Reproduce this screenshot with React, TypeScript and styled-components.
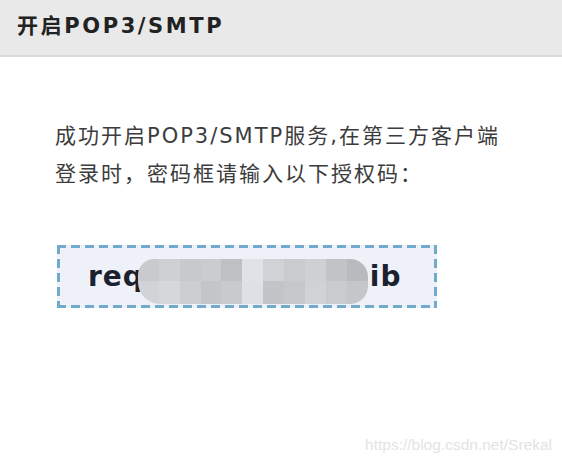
import React from "react";
import styled, { createGlobalStyle } from "styled-components";

const Global = createGlobalStyle`
  html, body { margin: 0; padding: 0; background: #ffffff; }
  body { width: 562px; height: 468px; overflow: hidden; }
`;

const Page = styled.div`
  width: 562px;
  height: 468px;
  display: flex;
  flex-direction: column;
  background: #ffffff;
  font-family: "DejaVu Sans", "Noto Sans CJK SC", sans-serif;
`;

const Header = styled.div`
  height: 57px;
  box-sizing: border-box;
  background: #e9e9e9;
  border-bottom: 2px solid #dadada;
  display: flex;
  align-items: center;
  padding: 0 0 8px 17px;
`;

const Title = styled.h1`
  margin: 0;
  font-size: 21px;
  font-weight: 700;
  color: #222222;
  letter-spacing: 2.6px;
`;

const Body = styled.div`
  flex: 1;
  display: flex;
  flex-direction: column;
  padding: 60px 0 0 55px;
`;

const Message = styled.p`
  margin: 0;
  font-size: 21px;
  line-height: 38px;
  color: #3c3c3c;
  letter-spacing: 2px;
  width: 500px;
`;

const CodeBox = styled.div`
  margin: 52px 0 0 2px;
  width: 380px;
  height: 63px;
  box-sizing: border-box;
  display: flex;
  align-items: center;
  padding: 0 0 0 31px;
  background-color: #eef2f8;
  background-image:
    repeating-linear-gradient(90deg, #72aace 0 9px, transparent 9px 14px),
    repeating-linear-gradient(90deg, #72aace 0 9px, transparent 9px 14px),
    repeating-linear-gradient(180deg, #72aace 0 9px, transparent 9px 14px),
    repeating-linear-gradient(180deg, #72aace 0 9px, transparent 9px 14px);
  background-size: 100% 3px, 100% 3px, 3px 100%, 3px 100%;
  background-position: 0 0, 0 100%, 0 0, 100% 0;
  background-repeat: no-repeat;
`;

const CodeText = styled.span`
  font-family: "DejaVu Sans", sans-serif;
  font-weight: 700;
  font-size: 28px;
  color: #1c2130;
  letter-spacing: 1px;
`;

const Mosaic = styled.div`
  width: 230px;
  height: 45px;
  margin: 9px 2px 0 -6px;
  border-radius: 16px 18px 18px 22px;
  overflow: hidden;
  display: grid;
  grid-template-rows: 1fr 1fr;
  grid-auto-flow: column;
  grid-auto-columns: 1fr;
`;

const Tile = styled.div<{ $c: string }>`
  background: ${(p) => p.$c};
`;

const Watermark = styled.div`
  margin-top: auto;
  align-self: flex-end;
  padding: 0 10px 14px 0;
  font-family: "Liberation Sans", Arial, sans-serif;
  font-size: 15.5px;
  color: #e3e3e3;
`;

const tiles: string[] = [
  "#c9cacd", "#d2d3d6",
  "#cfd0d3", "#d6d7da",
  "#c8c9cc", "#cdced1",
  "#cbcccf", "#c4c5c8",
  "#bfc0c3", "#c9cacd",
  "#dfe2e6", "#dde0e4",
  "#d1d2d5", "#c3c4c7",
  "#cacbce", "#c6c7ca",
  "#cfd0d3", "#d1d2d5",
  "#c2c3c6", "#cacbce",
  "#b9babd", "#c5c6c9",
];

export default function App() {
  return (
    <>
      <Global />
      <Page>
        <Header>
          <Title>开启POP3/SMTP</Title>
        </Header>
        <Body>
          <Message>
            成功开启POP3/SMTP服务,在第三方客户端
            <br />
            登录时，密码框请输入以下授权码：
          </Message>
          <CodeBox>
            <CodeText>req</CodeText>
            <Mosaic>
              {tiles.map((c, i) => (
                <Tile key={i} $c={c} />
              ))}
            </Mosaic>
            <CodeText>ib</CodeText>
          </CodeBox>
          <Watermark>https://blog.csdn.net/Srekal</Watermark>
        </Body>
      </Page>
    </>
  );
}
